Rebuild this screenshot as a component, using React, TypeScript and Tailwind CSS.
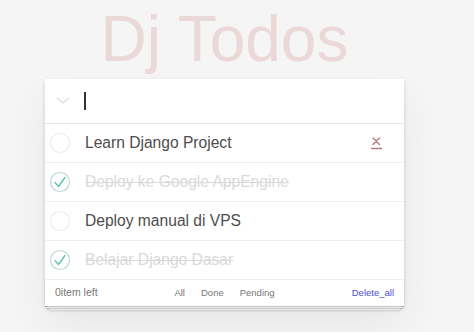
import React from "react";

type Todo = { id: number; title: string; done: boolean };

const todos: Todo[] = [
  { id: 1, title: "Learn Django Project", done: false },
  { id: 2, title: "Deploy ke Google AppEngine", done: true },
  { id: 3, title: "Deploy manual di VPS", done: false },
  { id: 4, title: "Belajar Django Dasar", done: true },
];

const CheckCircle: React.FC<{ checked: boolean }> = ({ checked }) => (
  <svg width="22" height="22" viewBox="0 0 22 22" className="shrink-0">
    <circle
      cx="11"
      cy="11"
      r="9.5"
      fill="none"
      stroke={checked ? "#bddad5" : "#ededed"}
      strokeWidth="1.2"
    />
    {checked && (
      <path
        d="M6 11.5 L9.5 15.5 L16 6.5"
        fill="none"
        stroke="#5dc2af"
        strokeWidth="1.3"
        strokeLinecap="round"
        strokeLinejoin="round"
      />
    )}
  </svg>
);

const DeleteIcon: React.FC = () => (
  <svg width="13" height="16" viewBox="0 0 13 16">
    <path d="M3 3 L9.5 9.5 M9.5 3 L3 9.5" stroke="#b5767a" strokeWidth="1.3" strokeLinecap="round" />
    <path d="M1 13.5 L12 13.5" stroke="#b5767a" strokeWidth="1.4" />
  </svg>
);

const TodoRow: React.FC<{ todo: Todo }> = ({ todo }) => (
  <li className="h-[39px] flex items-center border-b border-[#ededed] pl-[4px] pr-[21px]">
    <CheckCircle checked={todo.done} />
    <span
      className={`ml-[14px] flex-1 text-[15.6px] leading-none ${
        todo.done ? "text-[#d9d9d9] line-through" : "text-[#4d4d4d]"
      }`}
    >
      {todo.title}
    </span>
    {todo.id === 1 && <DeleteIcon />}
  </li>
);

export default function App() {
  return (
    <div
      className="min-h-[332px] w-full bg-[#f5f5f5] pt-[7px]"
      style={{ fontFamily: '"Liberation Sans", Arial, sans-serif' }}
    >
      <div className="ml-[45px] w-[359px]">
        <h1 className="text-center text-[64px] leading-none font-thin text-[#ebd8d9]">
          Dj Todos
        </h1>

        <section className="mt-[8px] bg-white shadow-[0_2px_4px_rgba(0,0,0,0.15),0_20px_40px_rgba(0,0,0,0.06)]">
          {/* New todo input */}
          <div className="h-[45px] flex items-center border-b border-[#e6e6e6]">
            <svg width="14" height="8" viewBox="0 0 14 8" className="ml-[11px]">
              <path d="M1 1 L7 6 L13 1" fill="none" stroke="#e0e0e0" strokeWidth="1.5" />
            </svg>
            <span className="ml-[14px] block w-[1.5px] h-[18px] bg-[#333]" />
          </div>

          <ul>
            {todos.map((t) => (
              <TodoRow key={t.id} todo={t} />
            ))}
          </ul>

          {/* Footer */}
          <footer className="h-[26px] grid grid-cols-3 items-center px-[10px] text-[10.5px] text-[#777] shadow-[0_1px_1px_rgba(0,0,0,0.2),0_4px_0_-2px_#f6f6f6,0_5px_1px_-2px_rgba(0,0,0,0.2),0_8px_0_-4px_#f6f6f6,0_9px_2px_-4px_rgba(0,0,0,0.15)]">
            <span>0item left</span>
            <div className="flex justify-center gap-[16px] text-[9.5px]">
              <span>All</span>
              <span>Done</span>
              <span>Pending</span>
            </div>
            <span className="text-right text-[9.5px] text-[#4b4bd3]">Delete_all</span>
          </footer>
        </section>
      </div>
    </div>
  );
}
